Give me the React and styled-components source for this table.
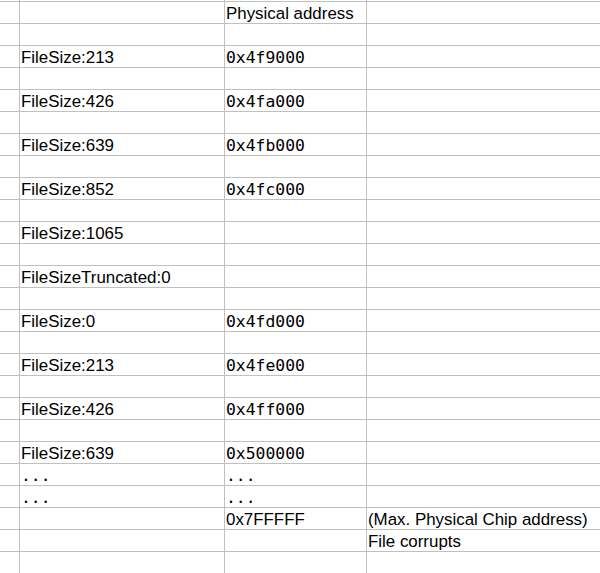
import React from 'react'
import styled, { createGlobalStyle } from 'styled-components'

const rows = [
  [null, { t: 'Physical address' }, null],
  [null, null, null],
  [{ t: 'FileSize:213' }, { t: '0x4f9000', mono: true }, null],
  [null, null, null],
  [{ t: 'FileSize:426' }, { t: '0x4fa000', mono: true }, null],
  [null, null, null],
  [{ t: 'FileSize:639' }, { t: '0x4fb000', mono: true }, null],
  [null, null, null],
  [{ t: 'FileSize:852' }, { t: '0x4fc000', mono: true }, null],
  [null, null, null],
  [{ t: 'FileSize:1065' }, null, null],
  [null, null, null],
  [{ t: 'FileSizeTruncated:0' }, null, null],
  [null, null, null],
  [{ t: 'FileSize:0' }, { t: '0x4fd000', mono: true }, null],
  [null, null, null],
  [{ t: 'FileSize:213' }, { t: '0x4fe000', mono: true }, null],
  [null, null, null],
  [{ t: 'FileSize:426' }, { t: '0x4ff000', mono: true }, null],
  [null, null, null],
  [{ t: 'FileSize:639' }, { t: '0x500000', mono: true }, null],
  [{ t: '...', mono: true }, { t: '...', mono: true }, null],
  [{ t: '...', mono: true }, { t: '...', mono: true }, null],
  [null, { t: '0x7FFFFF' }, { t: '(Max. Physical Chip address)' }],
  [null, null, { t: 'File corrupts' }],
  [null, null, null],
]

const App = () => {
  return (
    <>
      <GlobalStyle />
      <Sheet>
        {/* partial row cut off at the top edge */}
        <Row $top>
          <Cell />
          <Cell />
          <Cell />
          <Cell $last />
        </Row>
        {rows.map((r, i) => (
          <Row key={i}>
            <Cell />
            {r.map((c, j) => (
              <Cell key={j} $mono={c && c.mono} $last={j === 2}>
                {c ? c.t : ''}
              </Cell>
            ))}
          </Row>
        ))}
      </Sheet>
    </>
  )
}

// --- STYLED COMPONENTS ---

const GlobalStyle = createGlobalStyle`
  html, body {
    margin: 0;
    padding: 0;
    background: #fff;
    overflow: hidden;
  }
`

const Sheet = styled.div`
  width: 600px;
  height: 573px;
  overflow: hidden;
  display: flex;
  flex-direction: column;
`

const Row = styled.div`
  display: grid;
  grid-template-columns: 20px 205px 142px 1fr;
  height: ${p => (p.$top ? '1px' : '21px')};
  flex-shrink: 0;
  border-bottom: 1px solid #c0c0c0;
`

const Cell = styled.div`
  border-right: ${p => (p.$last ? 'none' : '1px solid #c0c0c0')};
  padding: 0 0 0 1px;
  display: flex;
  align-items: flex-end;
  white-space: nowrap;
  overflow: visible;
  color: #000;
  font-family: ${p => (p.$mono ? '"DejaVu Sans Mono", monospace' : '"Liberation Sans", Arial, sans-serif')};
  font-size: ${p => (p.$mono ? '16.4px' : '16.9px')};
  line-height: 18px;
`

export default App
